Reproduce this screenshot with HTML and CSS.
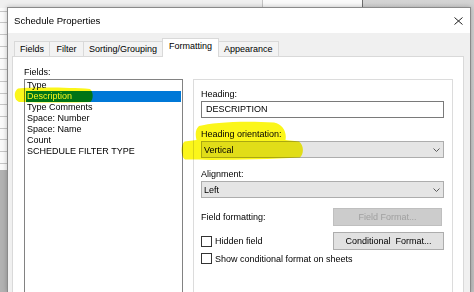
FILE: index.html
```html
<!DOCTYPE html>
<html>
  <head>
    <title>Schedule Properties</title>
    <link rel="stylesheet" href="styles.css">
  </head>
  <body>

    <div class="dialog">
      <div class="titlebar">
        <span class="title">Schedule Properties</span>
        <svg class="close" width="9" height="8" viewBox="0 0 9 8"><path d="M0.5 0.5 L8.5 7.5 M8.5 0.5 L0.5 7.5" stroke="#222" stroke-width="1" fill="none"/></svg>
      </div>

      <div class="tabs">
        <div class="tab">Fields</div>
        <div class="tab">Filter</div>
        <div class="tab">Sorting/Grouping</div>
        <div class="tab active">Formatting</div>
        <div class="tab">Appearance</div>
      </div>

      <div class="panel">
        <div class="fields-col">
          <div class="lbl-fields">Fields:</div>
          <ul class="listbox">
            <li>Type</li>
            <li class="selected">Description</li>
            <li>Type Comments</li>
            <li>Space: Number</li>
            <li>Space: Name</li>
            <li>Count</li>
            <li>SCHEDULE FILTER TYPE</li>
          </ul>
        </div>

        <div class="groupbox">
          <div class="field">
            <div class="lbl">Heading:</div>
            <div class="textbox">DESCRIPTION</div>
          </div>
          <div class="field">
            <div class="lbl">Heading orientation:</div>
            <div class="select">Vertical<svg class="chev" width="7" height="4" viewBox="0 0 7 4"><path d="M0.5 0.5 L3.5 3.5 L6.5 0.5" stroke="#5a5a5a" fill="none"/></svg></div>
          </div>
          <div class="field">
            <div class="lbl">Alignment:</div>
            <div class="select">Left<svg class="chev" width="7" height="4" viewBox="0 0 7 4"><path d="M0.5 0.5 L3.5 3.5 L6.5 0.5" stroke="#5a5a5a" fill="none"/></svg></div>
          </div>

          <div class="row row-format">
            <span>Field formatting:</span>
            <button type="button" class="btn btn-disabled" disabled>Field Format...</button>
          </div>
          <div class="row row-hidden">
            <span class="check"><span class="box"></span>Hidden field</span>
            <button type="button" class="btn">Conditional&nbsp; Format...</button>
          </div>
          <div class="row row-show">
            <span class="check"><span class="box"></span>Show conditional format on sheets</span>
          </div>
        </div>
      </div>
    </div>

    <!-- highlighter marks drawn over the screenshot -->
    <svg class="marker" width="474" height="292" viewBox="0 0 474 292">
      <path d="M18 88.5 C35 87 70 87.5 90 89 C93.5 92 93.5 99 90.5 102 C70 103 38 102.5 19 102 C13.5 100 13.5 91 18 88.5 Z"/>
      <path d="M199 126 C212 122.5 242 120.5 274 122.5 C283 124.5 287 132 285.5 140 L299 141.5 C304 145 304 154 300 157.5 C262 159.5 215 160.5 185 159.5 C180.5 156 180.5 145 184.5 141.5 L196.5 140 C195 134 195.5 129 199 126 Z"/>
    </svg>

  </body>
</html>
```

FILE: styles.css
```css
* { box-sizing: border-box; }

body {
  margin: 0;
  width: 474px;
  height: 292px;
  overflow: hidden;
  position: relative;
  font-family: "Liberation Sans", Arial, sans-serif;
  font-size: 9px;
  color: #000;
  /* bits of the revit window behind the dialog */
  background:
    linear-gradient(#6e6e6e, #6e6e6e) 362px 0 / 1px 8px no-repeat,
    linear-gradient(to bottom, #d4d4d4, #c2c2c2) 363px 0 / 111px 100% no-repeat,
    linear-gradient(#b2b2b2, #b2b2b2) 0 170px / 100% 100% no-repeat,
    linear-gradient(#c4c4c4, #c4c4c4) 262px 0 / 1px 8px no-repeat,
    linear-gradient(#f0f0f0, #f0f0f0) 0 0 / 262px 8px no-repeat,
    repeating-linear-gradient(to bottom, #fafafa 0 10.7px, #c6c6c6 10.7px 11.7px) 0 0 / 8px 170px no-repeat,
    #fafafa;
}

/* the dialog runs on past the bottom of the shot, so no bottom borders */
.dialog {
  margin: 7px 0 0 7px;
  width: 464px;
  height: 285px;
  display: flex;
  flex-direction: column;
  border: 1px solid #8a8a8a;
  border-bottom: none;
  background: #f0f0f0;
  box-shadow: 0 0 5px rgba(0, 0, 0, 0.25);
}

.titlebar {
  height: 25px;
  flex-shrink: 0;
  background: #fff;
  display: flex;
  align-items: center;
  justify-content: space-between;
  padding: 0 7px 0 6px;
}
.title { font-size: 9.6px; }

.tabs {
  display: flex;
  align-items: flex-end;
  flex-shrink: 0;
  height: 19px;
  margin: 5px 0 -1px 6px;
  position: relative;
  z-index: 1;
}
.tab {
  height: 15px;
  line-height: 14px;
  margin-bottom: 1px;
  padding: 0 5px;
  min-width: 35px;
  text-align: center;
  background: #f3f3f3;
  border: 1px solid #d9d9d9;
  border-bottom: none;
}
.tab + .tab { margin-left: -1px; }
.tab.active {
  height: 19px;
  line-height: 15px;
  margin-bottom: 0;
  padding: 0 6px;
  background: #fff;
}

.panel {
  flex: 1;
  margin: 0 6px 0 4px;
  background: #fff;
  border: 1px solid #d9d9d9;
  border-bottom: none;
  display: flex;
  gap: 10px;
  padding: 8px 0 0 11px;
}

.fields-col {
  width: 159px;
  display: flex;
  flex-direction: column;
}
.lbl-fields { line-height: 14px; }
.listbox {
  flex: 1;
  list-style: none;
  margin: 0;
  padding: 0 1px;
  border: 1px solid #828282;
  border-bottom: none;
}
.listbox li {
  line-height: 11px;
  padding-left: 1px;
}
.listbox li.selected { background: #0078d7; color: #fff; }

.groupbox {
  width: 260px;
  margin-top: 14px;
  border: 1px solid #dcdcdc;
  border-bottom: none;
  padding: 8px 8px 0 7px;
}

.field { margin-bottom: 10px; }
.lbl { line-height: 12px; margin-bottom: 1px; }
.textbox {
  height: 17px;
  line-height: 15px;
  margin-bottom: 1px;
  padding-left: 4px;
  border: 1px solid #7a7a7a;
  background: #fff;
}
.select {
  height: 17px;
  display: flex;
  align-items: center;
  justify-content: space-between;
  padding: 0 3px 0 2px;
  background: #e5e5e5;
  border: 1px solid #adadad;
}

.row {
  display: flex;
  align-items: center;
  justify-content: space-between;
}
.row-format { height: 18px; margin-top: 8px; }
.row-hidden { height: 18px; margin-top: 6px; }
.row-show { height: 11px; margin-top: 3px; }

.check { display: flex; align-items: center; }
.box {
  width: 11px;
  height: 11px;
  margin-right: 3px;
  border: 1px solid #333;
  background: #fff;
}

.btn {
  width: 111px;
  height: 18px;
  padding: 0;
  font-family: "Liberation Sans", Arial, sans-serif;
  font-size: 9px;
  color: #000;
  background: #e1e1e1;
  border: 1px solid #adadad;
}
.btn-disabled {
  width: 109px;
  margin-right: 2px;
  color: #a0a0a0;
  background: #cccccc;
  border-color: #bfbfbf;
}

.marker {
  position: absolute;
  top: 0;
  left: 0;
  pointer-events: none;
  mix-blend-mode: multiply;
  fill: #fbf61a;
  filter: blur(0.5px);
}
```
